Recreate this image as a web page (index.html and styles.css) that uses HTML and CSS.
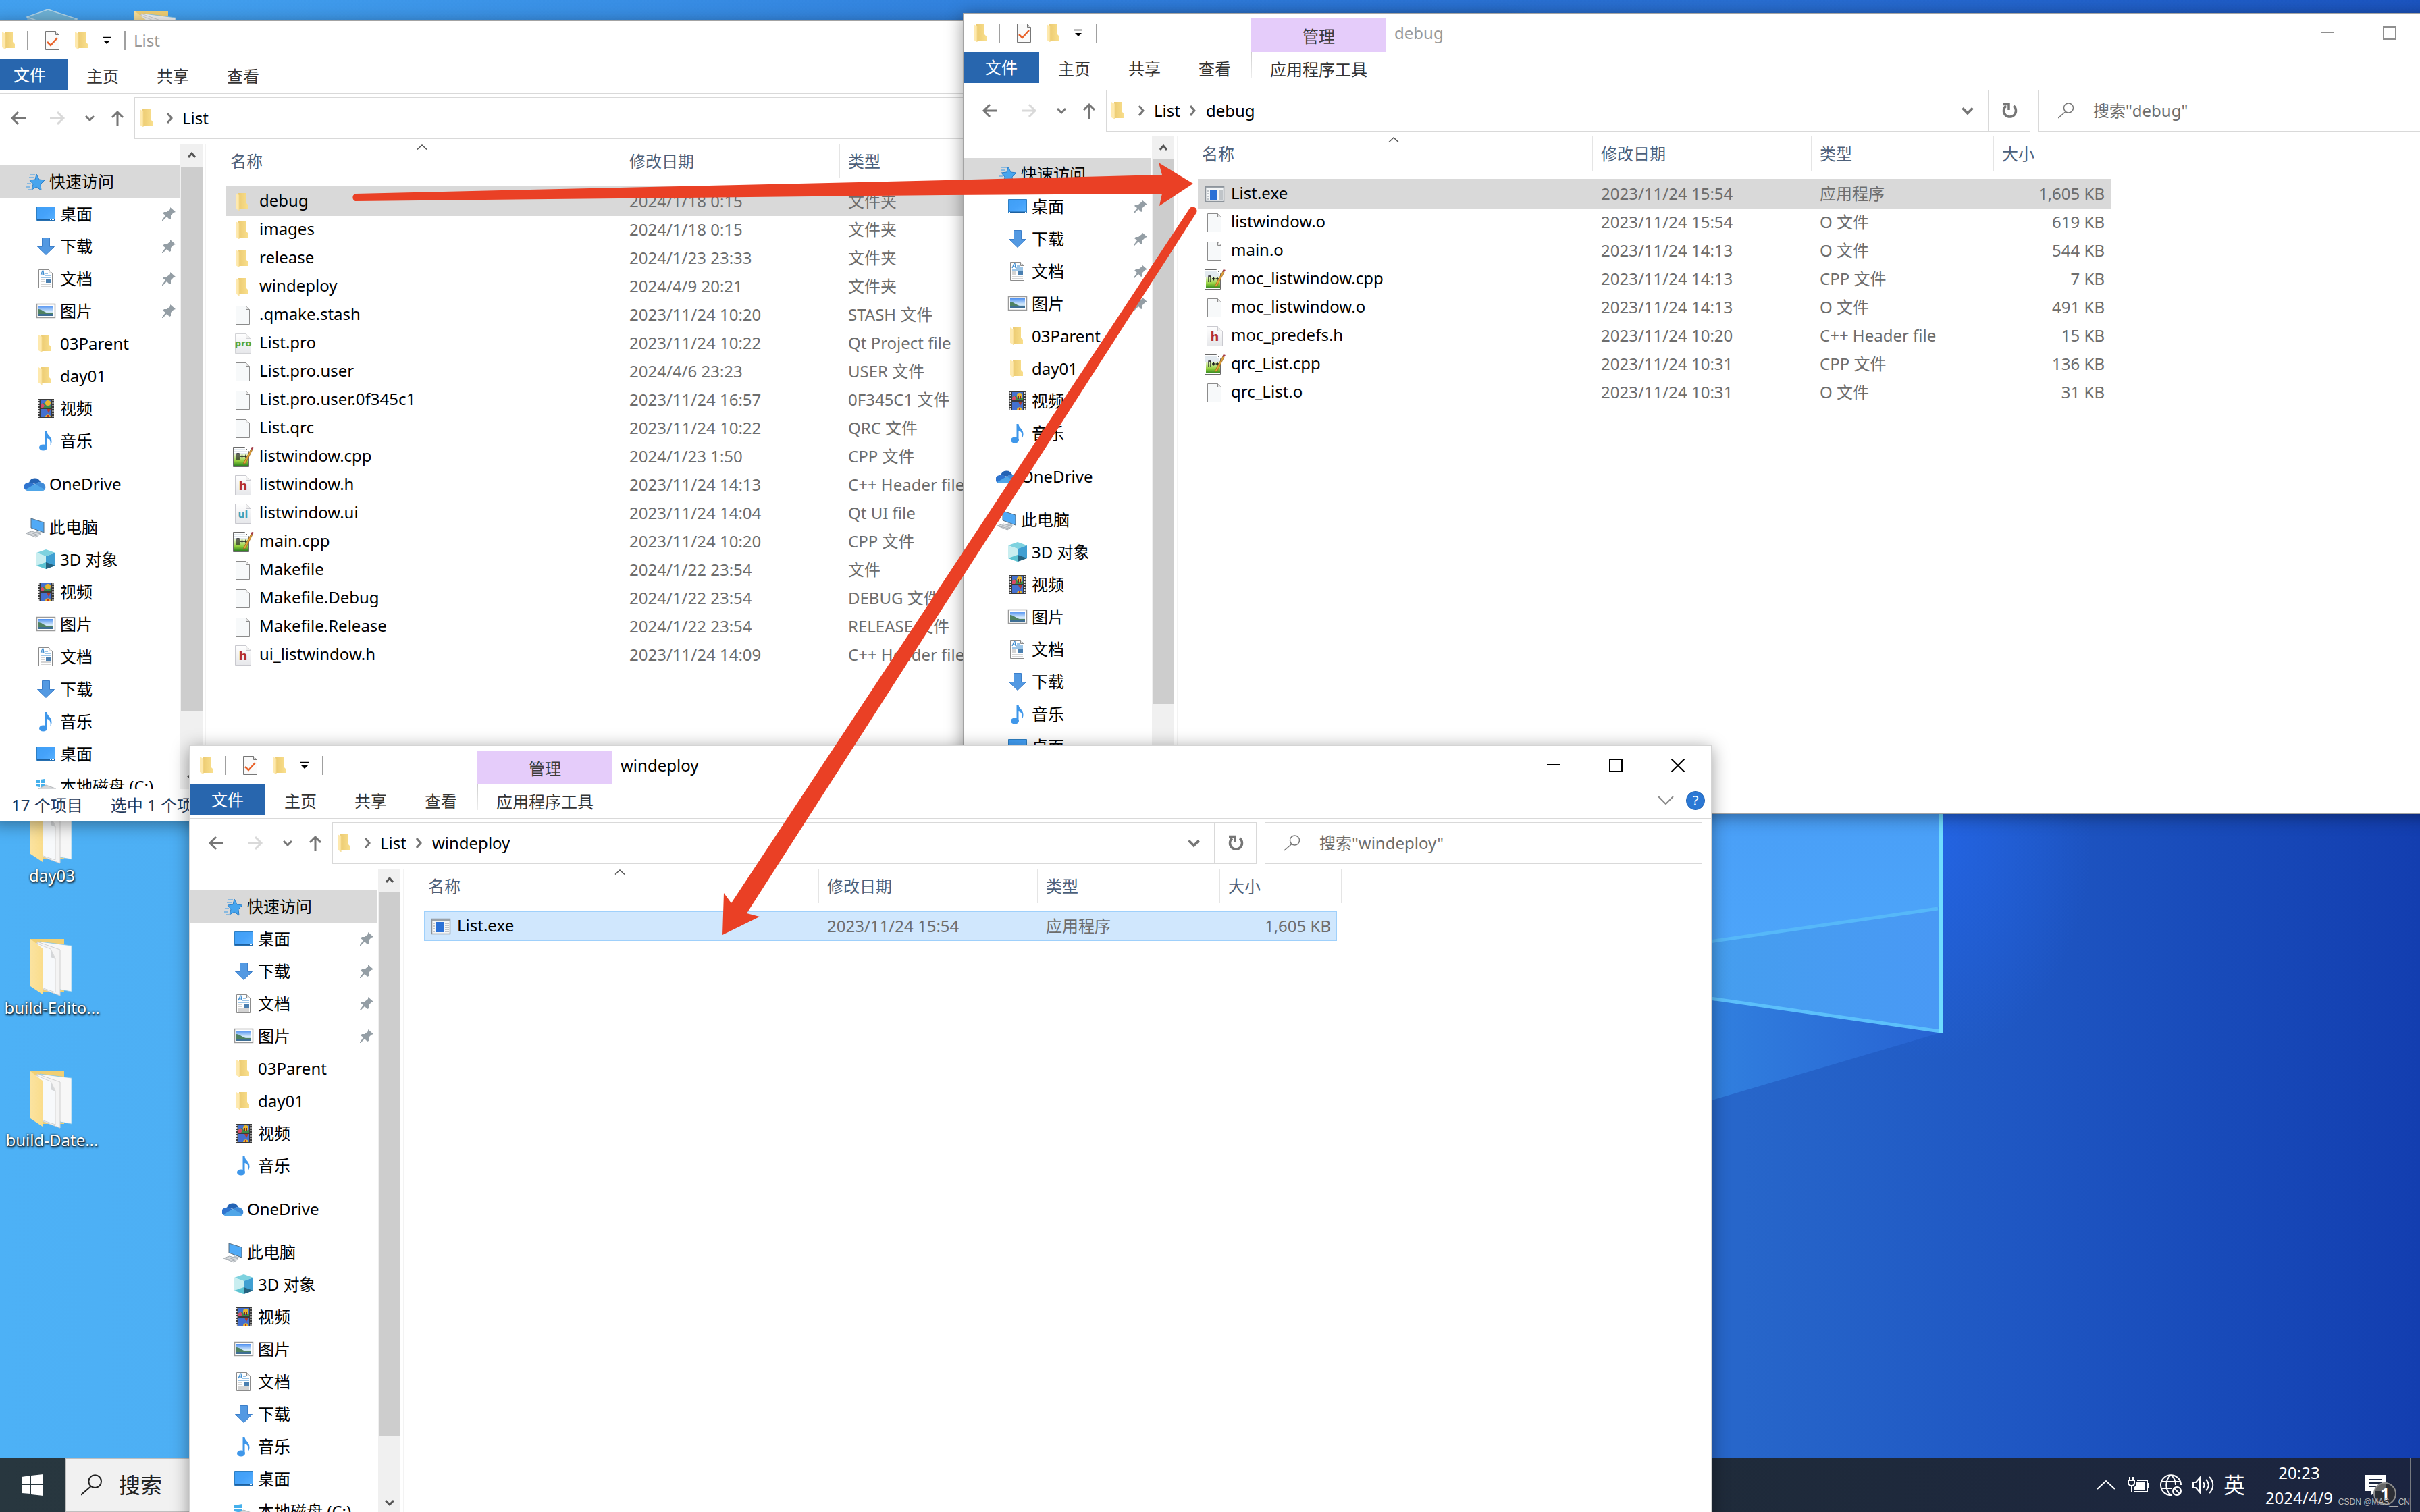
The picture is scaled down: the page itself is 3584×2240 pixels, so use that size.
FILE: index.html
```html
<!DOCTYPE html>
<html lang="zh-CN">
<head>
  <meta charset="UTF-8" />
  <meta name="viewport" content="width=device-width, initial-scale=1" />
  <title>windeploy</title>
  <link rel="stylesheet" href="styles.css">
</head>
<body>

  <!-- icons -->
  <svg class="sprite" aria-hidden="true">
    <defs>
      <linearGradient id="gFolder" x1="0" x2="1"><stop offset="0" stop-color="#eccb72"/><stop offset="1" stop-color="#f9df8d"/></linearGradient>
      <linearGradient id="gBlue" x1="0" y1="0" x2="1" y2="1"><stop offset="0" stop-color="#3f9ff5"/><stop offset="0.5" stop-color="#45a2fa"/><stop offset="1" stop-color="#58b2ff"/></linearGradient>
      <linearGradient id="gSky" x1="0" y1="0" x2="0" y2="1"><stop offset="0" stop-color="#4d8ff0"/><stop offset="0.6" stop-color="#d8ecfb"/><stop offset="1" stop-color="#7da5c4"/></linearGradient>
      <linearGradient id="gGreen" x1="0" y1="0" x2="0" y2="1"><stop offset="0" stop-color="#e9f7cf"/><stop offset="0.6" stop-color="#93cf3c"/><stop offset="1" stop-color="#2e8420"/></linearGradient>
      <linearGradient id="gPage" x1="0" y1="0" x2="0" y2="1"><stop offset="0" stop-color="#ffffff"/><stop offset="1" stop-color="#e6e7ea"/></linearGradient>
      <linearGradient id="gOpen" x1="0" x2="1"><stop offset="0" stop-color="#fbe3a0"/><stop offset="1" stop-color="#fadd8c"/></linearGradient>
    </defs>
    <symbol id="folder" viewBox="0 0 32 32">
      <path d="M9 3h12v15l3 3v6H10z" fill="url(#gFolder)"/>
      <path d="M5 3l5 3v23l-5-3z" fill="#fee9ae"/>
      <path d="M10 6v23" stroke="#f4d888" fill="none"/>
    </symbol>
    <symbol id="file" viewBox="0 0 32 32">
      <path d="M5.500 2.500h15l5 5v22h-20z" fill="#f7f9fa" stroke="#8c8c8c"/>
      <path d="M20.500 2.500v5h5" fill="#e2e2e2" stroke="#8c8c8c"/>
    </symbol>
    <symbol id="check" viewBox="0 0 32 32">
      <path d="M5.500 2.500h15l5 5v22h-20z" fill="#fafafa" stroke="#777"/>
      <path d="M20.500 2.500v5h5" fill="#ddd" stroke="#777"/>
      <path d="M8 18l5 5 10-11" fill="none" stroke="#e8622a" stroke-width="2.500"/>
    </symbol>
    <symbol id="pro" viewBox="0 0 32 32">
      <path d="M4.500 1.500h16l7 7v22h-23z" fill="url(#gPage)" stroke="#d2d3d6"/>
      <path d="M20.500 1.500v7h7" fill="#eee" stroke="#d2d3d6"/>
      <text x="16" y="20" text-anchor="middle" class="badge-text" fill="#57a639" font-size="13">pro</text>
    </symbol>
    <symbol id="hfile" viewBox="0 0 32 32">
      <path d="M4.500 1.500h16l7 7v22h-23z" fill="url(#gPage)" stroke="#c9c9cf"/>
      <path d="M20.500 1.500v7h7" fill="#eee" stroke="#c9c9cf"/>
      <text x="16" y="23" text-anchor="middle" class="badge-text" fill="#b53030" font-size="18">h</text>
    </symbol>
    <symbol id="uifile" viewBox="0 0 32 32">
      <path d="M4.500 1.500h16l7 7v22h-23z" fill="url(#gPage)" stroke="#c9c9cf"/>
      <path d="M20.500 1.500v7h7" fill="#eee" stroke="#c9c9cf"/>
      <text x="16" y="22" text-anchor="middle" class="badge-text" fill="#3fa3bb" font-size="14">ui</text>
    </symbol>
    <symbol id="cpp" viewBox="0 0 32 32">
      <path d="M1.500 1.500h17l6 6v23h-23z" fill="#fff" stroke="#6b6b6b"/>
      <path d="M2 5h17M2 8h20M2 11h22" stroke="#c6d4e0" fill="none"/>
      <path d="M3 12h21v17H3z" fill="url(#gGreen)"/>
      <path d="M7 20v-9h3v9M12 15h5M14.500 12.500v5M17.500 15h5M20 12.500v5" stroke="#1c1c1c" stroke-width="1.300" fill="none"/>
      <path d="M17 24L28 4l2 1-10 20-4 2z" fill="#e6a23a" stroke="#9a6a20" stroke-width="0.800"/>
      <path d="M27 4l2-3 3 1-2 3z" fill="#a63c48"/>
    </symbol>
    <symbol id="exe" viewBox="0 0 32 32">
      <path d="M2.500 4.500h27v22h-27z" fill="#f3f5f6" stroke="#8d949b" stroke-width="1.500"/>
      <path d="M3 6h26" stroke="#9aa1a8" stroke-width="2"/>
      <path d="M9 9h11v15H9z" fill="#2a70d6"/>
      <path d="M4 11h3M4 15h3M4 19h3M4 23h3M22 11h6M22 14h6M22 17h6M22 20h6M22 23h6" stroke="#8d949b" fill="none"/>
    </symbol>
    <symbol id="star" viewBox="0 0 32 32">
      <path d="M18 5l4 8 8 1-6 6 1 9-7-5-7 4 2-8-5-6 8-1z" fill="#47a5ee" stroke="#2b7fc9"/>
      <path d="M8 6h8M7 10h7M4 19h6M3 24h6M6 28h4" stroke="#6eaee2" stroke-width="1.500" fill="none"/>
    </symbol>
    <symbol id="desktop" viewBox="0 0 32 32">
      <path d="M2.500 5.500h27v20h-27z" fill="url(#gBlue)" stroke="#2d7fc4"/>
      <path d="M3 24.500h26" stroke="#1e609f" stroke-width="2"/>
      <path d="M4 24.500h1M22 24.500h1M25 24.500h1M27 24.500h1" stroke="#fff"/>
    </symbol>
    <symbol id="download" viewBox="0 0 32 32">
      <path d="M10.500 3.500h11v13h7L16 28.500 3.500 16.500h7z" fill="#5399e2" stroke="#3c7fca"/>
    </symbol>
    <symbol id="doc" viewBox="0 0 32 32">
      <path d="M5.500 2.500h15l5 5v22h-20z" fill="#fff" stroke="#8c8c8c"/>
      <path d="M20.500 2.500v5h5" fill="#e2e2e2" stroke="#8c8c8c"/>
      <path d="M8 11l3-7h1l1 7M9 9h4M15 8h4M14 11h10M8 14h16" stroke="#3a8bd0" stroke-width="1.200" fill="none"/>
      <path d="M16 16h8v6h-8z" fill="#4a7fb0"/>
      <path d="M8 17h6M8 20h6M8 24h16M8 27h16" stroke="#a9a9a9" fill="none"/>
    </symbol>
    <symbol id="picture" viewBox="0 0 32 32">
      <path d="M2.500 5.500h27v20h-27z" fill="#fff" stroke="#9a9a9a" stroke-width="1.500"/>
      <path d="M5 8h22v15H5z" fill="url(#gSky)"/>
      <path d="M5 13c4 0 8 4 14 6h8v1H5z" fill="#4f8262"/>
      <path d="M5 20h22v3H5z" fill="#3f6f95"/>
    </symbol>
    <symbol id="video" viewBox="0 0 32 32">
      <path d="M4 2h24v28H4z" fill="#3a3a3a"/>
      <path d="M8 3h16v12H8zM8 17h16v12H8z" fill="#4470cf"/>
      <path d="M5.500 3v26M26.500 3v26" stroke="#e8e8e8" stroke-width="2" stroke-dasharray="2 2"/>
      <path d="M8 10l5-2 5 5 6-2v4H8z" fill="#3c8c46"/>
      <path d="M8 11l3-3 3 4-2 3H8z" fill="#d94a6a"/>
      <circle cx="19" cy="8" r="4" fill="#e9b82c"/><path d="M17 8h1v5h-1zM20 8h1v5h-1z" fill="#7a2b1a"/>
      <path d="M17 17h6l-3 6z" fill="#b3382c"/><path d="M15 29c0-5 8-5 8 0z" fill="#e9b82c"/><path d="M18 26h2v3h-2z" fill="#c03020"/>
    </symbol>
    <symbol id="music" viewBox="0 0 32 32">
      <ellipse cx="12" cy="26" rx="6" ry="4.500" fill="#3f97ea"/>
      <path d="M14.500 2h3c0 6 7 7 7 15 0 3-1 5-2 6 1-7-1-10-5-11v14h-3z" fill="#3f97ea"/>
    </symbol>
    <symbol id="cloud" viewBox="0 0 32 32">
      <path d="M7 14a9 9 0 0 1 17-1c-3 0-5 1-7 3z" fill="#2463b4"/>
      <path d="M6 26a6 6 0 0 1-1-12c4-1 7 0 11 3L6 26z" fill="#2f74cf"/>
      <path d="M16 17c3-4 7-5 10-3 7 2 7 11 1 12z" fill="#3f8bd8"/>
      <path d="M2 24l14-8 14 8c-1 1-2 2-4 2H6c-2 0-3-1-4-2z" fill="#50a6e8"/>
    </symbol>
    <symbol id="pc" viewBox="0 0 32 32">
      <path d="M10 3l19 6v15l-19-7z" fill="#50aaf6" stroke="#566a7c"/>
      <path d="M18 21l5 2 3 1-7 3-4-2z" fill="#b9c2c9"/>
      <path d="M2 25l9-3 13 4-7 5z" fill="#d9dcdf" stroke="#a9afb4"/>
      <path d="M6 26l13 3M9 24l12 4" stroke="#a9afb4" fill="none"/>
    </symbol>
    <symbol id="cube" viewBox="0 0 32 32">
      <path d="M16 1l14 5-14 5L2 6z" fill="#7ed2df"/>
      <path d="M2 6l14 5v19L2 25z" fill="#c9eef0"/>
      <path d="M30 6l-14 5v19l14-5z" fill="#3f9fd2"/>
      <path d="M2 25l14-5v10z" fill="#5cc3d2"/>
      <path d="M30 25l-14-5v10z" fill="#25627f"/>
    </symbol>
    <symbol id="disk" viewBox="0 0 32 32">
      <path d="M2 7l5-1v5H2zM8 6l6-1v6H8zM2 12h5v5l-5-1zM8 12h6v6l-6-1z" fill="#45b0ec"/>
      <path d="M4 20l12-6 14 5v7H4z" fill="#d5d7da" stroke="#b4b7ba"/>
    </symbol>
    <symbol id="pin" viewBox="0 0 20 20">
      <path d="M12 0l8 7-3 1-4 4v5l-2 1-4-4-6 6H0v-1l5-7-4-3 2-2 4 0 5-4z" fill="#949ea5"/>
    </symbol>
    <symbol id="back" viewBox="0 0 24 24"><path d="M23 12H3M12 3l-9 9 9 9" fill="none" stroke="currentColor" stroke-width="3"/></symbol>
    <symbol id="forward" viewBox="0 0 24 24"><path d="M1 12h20M12 3l9 9-9 9" fill="none" stroke="currentColor" stroke-width="3"/></symbol>
    <symbol id="up" viewBox="0 0 24 24"><path d="M12 24V3M4 11l8-8 8 8" fill="none" stroke="currentColor" stroke-width="3"/></symbol>
    <symbol id="chev-down" viewBox="0 0 16 16"><path d="M2 5l6 6 6-6" fill="none" stroke="currentColor" stroke-width="3"/></symbol>
    <symbol id="chev-up" viewBox="0 0 16 16"><path d="M3 11l5-6 5 6" fill="none" stroke="currentColor" stroke-width="3"/></symbol>
    <symbol id="chev-right" viewBox="0 0 16 16"><path d="M4 1l6 7-6 7" fill="none" stroke="currentColor" stroke-width="3"/></symbol>
    <symbol id="sort" viewBox="0 0 16 8"><path d="M1 7.500l7-6.500 7 6.500" fill="none" stroke="#555" stroke-width="1.500"/></symbol>
    <symbol id="qa-menu" viewBox="0 0 12 12"><path d="M0 1.500h12" stroke="#000" stroke-width="1.500"/><path d="M1 6h10l-5 5z" fill="#000"/></symbol>
    <symbol id="refresh" viewBox="0 0 24 24">
      <path d="M18 5a9 9 0 1 1-11 0" fill="none" stroke="currentColor" stroke-width="3.500"/>
      <path d="M2 2.500h9V11" fill="none" stroke="currentColor" stroke-width="3.500"/>
    </symbol>
    <symbol id="search" viewBox="0 0 24 24"><circle cx="15.500" cy="8" r="7" fill="none" stroke="currentColor" stroke-width="1.500"/><path d="M11 13.500L0 23" stroke="currentColor" stroke-width="1.500"/></symbol>
    <symbol id="min" viewBox="0 0 20 20"><path d="M0 9h20" stroke="currentColor" stroke-width="2"/></symbol>
    <symbol id="max" viewBox="0 0 20 20"><path d="M1 1h18v18H1z" fill="none" stroke="currentColor" stroke-width="2"/></symbol>
    <symbol id="close" viewBox="0 0 20 20"><path d="M0 0l20 20M20 0L0 20" stroke="currentColor" stroke-width="2"/></symbol>
    <symbol id="collapse" viewBox="0 0 24 24"><path d="M1 7l11 11L23 7" fill="none" stroke="#8a8a8a" stroke-width="2"/></symbol>
    <symbol id="bin" viewBox="0 0 76 88">
      <path d="M1 11L32 0l43 14v60L38 88 8 74z" fill="#7fb7dc"/>
      <path d="M1 11L32 0l43 14-32 12z" fill="#6fb3d8" stroke="#b4d7ea" stroke-width="1.500"/>
    </symbol>
    <symbol id="openfolder" viewBox="0 0 64 88">
      <path d="M0 2h50v78H18z" fill="#f0cf74"/>
      <path d="M14 6l47 6v68l-17-3z" fill="#f7f7f7" stroke="#7fc4ea" stroke-width="0.800"/>
      <path d="M10 6l34 12v68L18 76z" fill="#f4f4f4" stroke="#cfcfcf"/>
      <path d="M8 8l22 9 7 14v50L16 74z" fill="#f7f9fb" stroke="#d5d5d5"/>
      <path d="M30 17v12l7 3z" fill="#d4d6d8"/>
      <path d="M0 2l18 14v68L0 72z" fill="url(#gOpen)"/>
    </symbol>
  </svg>

  <div class="desktop">
    <svg class="wallpaper" viewBox="0 0 3584 2240" preserveAspectRatio="none" aria-hidden="true">
      <defs>
        <linearGradient id="wBase" x1="0" x2="1">
          <stop offset="0" stop-color="#4db1f6"/><stop offset="0.080" stop-color="#4daff4"/>
          <stop offset="0.400" stop-color="#3482db"/><stop offset="0.640" stop-color="#2767ca"/>
          <stop offset="0.720" stop-color="#2766ca"/><stop offset="0.830" stop-color="#1f57c3"/>
          <stop offset="0.920" stop-color="#184ab9"/><stop offset="1" stop-color="#133eb0"/>
        </linearGradient>
        <linearGradient id="wTop" x1="0" y1="0" x2="0" y2="1"><stop offset="0" stop-color="#2c7fe0" stop-opacity="0.350"/><stop offset="0.500" stop-color="#2c7fe0" stop-opacity="0"/></linearGradient>
        <radialGradient id="wGlow"><stop offset="0" stop-color="#2468f0" stop-opacity="0.700"/><stop offset="1" stop-color="#2468f0" stop-opacity="0"/></radialGradient>
        <linearGradient id="wPane" x1="0" y1="0" x2="0" y2="1"><stop offset="0" stop-color="#4699f4"/><stop offset="1" stop-color="#4da5fa"/></linearGradient>
        <linearGradient id="wLower" x1="0" x2="1"><stop offset="0.250" stop-color="#459eee"/><stop offset="1" stop-color="#4999f5"/></linearGradient>
        <linearGradient id="wBeam" x1="0" x2="1"><stop offset="0.200" stop-color="#3283e0"/><stop offset="1" stop-color="#2762d2"/></linearGradient>
      </defs>
      <rect width="3584" height="2240" fill="url(#wBase)"/>
      <rect width="3584" height="2240" fill="url(#wTop)"/>
      <ellipse cx="2860" cy="1230" rx="240" ry="340" fill="url(#wGlow)"/>
      <path d="M2400 1450l477 79-477 141z" fill="url(#wBeam)"/>
      <path d="M2400 1000h477v530l-477-70z" fill="url(#wLower)"/>
      <path d="M2400 1000h477v343l-477 70z" fill="url(#wPane)"/>
      <path d="M2400 1414l470-68" stroke="#56b8f9" stroke-width="5" fill="none"/>
      <path d="M2400 1460l474 68" stroke="#5cc0fb" stroke-width="5" fill="none"/>
      <path d="M2874 1000v531" stroke="#6fdcff" stroke-width="6" fill="none"/>
    </svg>

    <div class="shortcut at-bin"><svg class="big"><use href="#bin"/></svg></div>
    <div class="shortcut at-top"><svg class="big"><use href="#openfolder"/></svg></div>
    <div class="shortcut at-day03"><svg class="big"><use href="#openfolder"/></svg><span>day03</span></div>
    <div class="shortcut at-editor"><svg class="big"><use href="#openfolder"/></svg><span>build-Edito...</span></div>
    <div class="shortcut at-date"><svg class="big"><use href="#openfolder"/></svg><span>build-Date...</span></div>

    <footer class="taskbar">
      <button class="start" title="开始"><svg viewBox="0 0 32 32"><path d="M0 4l13-2v13H0zM14 2l18-2v15H14zM0 16h13v13L0 28zM14 16h18v16l-18-2z" fill="#fff"/></svg></button>
      <button class="task-search"><svg><use href="#search"/></svg>搜索</button>
      <div class="tray">
        <button class="tray-btn" title="显示隐藏的图标"><svg viewBox="0 0 32 32"><path d="M3 22L16 10l13 12" fill="none" stroke="#fff" stroke-width="2"/></svg></button>
        <button class="tray-btn" title="电池"><svg viewBox="0 0 32 32"><path d="M3 4v5M8 4v5M1 9h9v4c0 3-2 4-4 4s-5-1-5-4zM6 17v10M14 9h15v17H9" fill="none" stroke="#fff" stroke-width="2"/><path d="M13 12h13v11H10v-4l3-3zM30 13h2v7h-2z" fill="#fff"/></svg></button>
        <button class="tray-btn" title="网络"><svg viewBox="0 0 32 32"><path d="M18 31A15 15 0 1 1 31 16M16 1c-9 8-9 22 0 30M16 1c5 4 7 9 7 15M2 11h28M2 21h16" fill="none" stroke="#fff" stroke-width="2"/><circle cx="25" cy="25" r="6" fill="none" stroke="#fff" stroke-width="2"/><path d="M21 21l8 8" stroke="#fff" stroke-width="2"/></svg></button>
        <button class="tray-btn" title="音量"><svg viewBox="0 0 32 32"><path d="M1 12h4l6-7v22l-6-7H1zM16 12c2 2 2 6 0 8M20 8c5 5 5 11 0 16M25 4c7 7 7 17 0 24" fill="none" stroke="#fff" stroke-width="2"/></svg></button>
        <button class="ime">英</button>
        <div class="clock"><span>20:23</span><span>2024/4/9</span></div>
        <button class="notice" title="通知"><svg viewBox="0 0 32 32"><path d="M0 1h32v24H16l-6 6v-6H0z" fill="#fff"/><path d="M6 8h20M6 13h20M6 18h12" stroke="#1c2740" stroke-width="2"/></svg><span class="count">1</span></button>
        <div class="show-desktop"></div>
      </div>
    </footer>

    <!-- List -->
    <section class="window win-list inactive">
      <header class="titlebar">
        <div class="quick">
          <svg class="icon"><use href="#folder"/></svg><i class="sep"></i>
          <button title="属性"><svg class="icon"><use href="#check"/></svg></button>
          <button title="新建文件夹"><svg class="icon"><use href="#folder"/></svg></button>
          <button class="narrow" title="自定义"><svg class="caret"><use href="#qa-menu"/></svg></button><i class="sep"></i>
        </div>
        <h1>List</h1>
      </header>
      <nav class="tabs">
        <button class="tab file-tab">文件</button><button class="tab">主页</button><button class="tab">共享</button><button class="tab">查看</button>
      </nav>
      <div class="nav">
        <button class="go"><svg><use href="#back"/></svg></button>
        <button class="go off"><svg><use href="#forward"/></svg></button>
        <button class="recent"><svg><use href="#chev-down"/></svg></button>
        <button class="parent"><svg><use href="#up"/></svg></button>
        <div class="address">
          <svg class="icon"><use href="#folder"/></svg><svg class="crumb-sep"><use href="#chev-right"/></svg><a href="#">List</a>
        </div>
      </div>
      <div class="body">
        <aside class="side">
          <a class="top selected" href="#"><svg class="icon"><use href="#star"/></svg>快速访问</a>
          <a href="#"><svg class="icon"><use href="#desktop"/></svg>桌面<svg class="pin"><use href="#pin"/></svg></a>
          <a href="#"><svg class="icon"><use href="#download"/></svg>下载<svg class="pin"><use href="#pin"/></svg></a>
          <a href="#"><svg class="icon"><use href="#doc"/></svg>文档<svg class="pin"><use href="#pin"/></svg></a>
          <a href="#"><svg class="icon"><use href="#picture"/></svg>图片<svg class="pin"><use href="#pin"/></svg></a>
          <a href="#"><svg class="icon"><use href="#folder"/></svg>03Parent</a>
          <a href="#"><svg class="icon"><use href="#folder"/></svg>day01</a>
          <a href="#"><svg class="icon"><use href="#video"/></svg>视频</a>
          <a href="#"><svg class="icon"><use href="#music"/></svg>音乐</a>
          <a class="top group" href="#"><svg class="icon"><use href="#cloud"/></svg>OneDrive</a>
          <a class="top group" href="#"><svg class="icon"><use href="#pc"/></svg>此电脑</a>
          <a href="#"><svg class="icon"><use href="#cube"/></svg>3D 对象</a>
          <a href="#"><svg class="icon"><use href="#video"/></svg>视频</a>
          <a href="#"><svg class="icon"><use href="#picture"/></svg>图片</a>
          <a href="#"><svg class="icon"><use href="#doc"/></svg>文档</a>
          <a href="#"><svg class="icon"><use href="#download"/></svg>下载</a>
          <a href="#"><svg class="icon"><use href="#music"/></svg>音乐</a>
          <a href="#"><svg class="icon"><use href="#desktop"/></svg>桌面</a>
          <a href="#"><svg class="icon"><use href="#disk"/></svg>本地磁盘 (C:)</a>
        </aside>
        <div class="scroll"><svg><use href="#chev-up"/></svg><div class="thumb"></div><svg><use href="#chev-down"/></svg></div>
        <main class="pane">
          <table class="files">
            <thead><tr><th class="c-name">名称<svg class="sort"><use href="#sort"/></svg></th><th class="c-date">修改日期</th><th class="c-type">类型</th><th class="c-size">大小</th></tr></thead>
            <tbody>
              <tr class="selected"><td><svg class="icon"><use href="#folder"/></svg>debug</td><td>2024/1/18 0:15</td><td>文件夹</td><td></td></tr>
              <tr><td><svg class="icon"><use href="#folder"/></svg>images</td><td>2024/1/18 0:15</td><td>文件夹</td><td></td></tr>
              <tr><td><svg class="icon"><use href="#folder"/></svg>release</td><td>2024/1/23 23:33</td><td>文件夹</td><td></td></tr>
              <tr><td><svg class="icon"><use href="#folder"/></svg>windeploy</td><td>2024/4/9 20:21</td><td>文件夹</td><td></td></tr>
              <tr><td><svg class="icon"><use href="#file"/></svg>.qmake.stash</td><td>2023/11/24 10:20</td><td>STASH 文件</td><td></td></tr>
              <tr><td><svg class="icon"><use href="#pro"/></svg>List.pro</td><td>2023/11/24 10:22</td><td>Qt Project file</td><td></td></tr>
              <tr><td><svg class="icon"><use href="#file"/></svg>List.pro.user</td><td>2024/4/6 23:23</td><td>USER 文件</td><td></td></tr>
              <tr><td><svg class="icon"><use href="#file"/></svg>List.pro.user.0f345c1</td><td>2023/11/24 16:57</td><td>0F345C1 文件</td><td></td></tr>
              <tr><td><svg class="icon"><use href="#file"/></svg>List.qrc</td><td>2023/11/24 10:22</td><td>QRC 文件</td><td></td></tr>
              <tr><td><svg class="icon"><use href="#cpp"/></svg>listwindow.cpp</td><td>2024/1/23 1:50</td><td>CPP 文件</td><td></td></tr>
              <tr><td><svg class="icon"><use href="#hfile"/></svg>listwindow.h</td><td>2023/11/24 14:13</td><td>C++ Header file</td><td></td></tr>
              <tr><td><svg class="icon"><use href="#uifile"/></svg>listwindow.ui</td><td>2023/11/24 14:04</td><td>Qt UI file</td><td></td></tr>
              <tr><td><svg class="icon"><use href="#cpp"/></svg>main.cpp</td><td>2023/11/24 10:20</td><td>CPP 文件</td><td></td></tr>
              <tr><td><svg class="icon"><use href="#file"/></svg>Makefile</td><td>2024/1/22 23:54</td><td>文件</td><td></td></tr>
              <tr><td><svg class="icon"><use href="#file"/></svg>Makefile.Debug</td><td>2024/1/22 23:54</td><td>DEBUG 文件</td><td></td></tr>
              <tr><td><svg class="icon"><use href="#file"/></svg>Makefile.Release</td><td>2024/1/22 23:54</td><td>RELEASE 文件</td><td></td></tr>
              <tr><td><svg class="icon"><use href="#hfile"/></svg>ui_listwindow.h</td><td>2023/11/24 14:09</td><td>C++ Header file</td><td></td></tr>
            </tbody>
          </table>
        </main>
      </div>
      <div class="status"><span>17 个项目</span><span>选中 1 个项目</span></div>
    </section>

    <!-- debug -->
    <section class="window win-debug inactive">
      <header class="titlebar">
        <div class="quick wide">
          <svg class="icon"><use href="#folder"/></svg><i class="sep"></i>
          <button title="属性"><svg class="icon"><use href="#check"/></svg></button>
          <button title="新建文件夹"><svg class="icon"><use href="#folder"/></svg></button>
          <button class="narrow" title="自定义"><svg class="caret"><use href="#qa-menu"/></svg></button><i class="sep"></i>
        </div>
        <div class="context">管理</div>
        <h1>debug</h1>
        <div class="controls">
          <button title="最小化"><svg><use href="#min"/></svg></button><button title="最大化"><svg><use href="#max"/></svg></button><button title="关闭"><svg><use href="#close"/></svg></button>
        </div>
      </header>
      <nav class="tabs">
        <button class="tab file-tab">文件</button><button class="tab">主页</button><button class="tab">共享</button><button class="tab">查看</button><button class="tab context-tab">应用程序工具</button>
      </nav>
      <div class="nav">
        <button class="go"><svg><use href="#back"/></svg></button>
        <button class="go off"><svg><use href="#forward"/></svg></button>
        <button class="recent"><svg><use href="#chev-down"/></svg></button>
        <button class="parent"><svg><use href="#up"/></svg></button>
        <div class="address">
          <svg class="icon"><use href="#folder"/></svg><svg class="crumb-sep"><use href="#chev-right"/></svg><a href="#">List</a><svg class="crumb-sep"><use href="#chev-right"/></svg><a href="#">debug</a>
          <button class="drop"><svg><use href="#chev-down"/></svg></button>
          <button class="reload"><svg><use href="#refresh"/></svg></button>
        </div>
        <label class="find"><svg><use href="#search"/></svg><input type="text" aria-label="搜索" placeholder="搜索&quot;debug&quot;"></label>
      </div>
      <div class="body">
        <aside class="side">
          <a class="top selected" href="#"><svg class="icon"><use href="#star"/></svg>快速访问</a>
          <a href="#"><svg class="icon"><use href="#desktop"/></svg>桌面<svg class="pin"><use href="#pin"/></svg></a>
          <a href="#"><svg class="icon"><use href="#download"/></svg>下载<svg class="pin"><use href="#pin"/></svg></a>
          <a href="#"><svg class="icon"><use href="#doc"/></svg>文档<svg class="pin"><use href="#pin"/></svg></a>
          <a href="#"><svg class="icon"><use href="#picture"/></svg>图片<svg class="pin"><use href="#pin"/></svg></a>
          <a href="#"><svg class="icon"><use href="#folder"/></svg>03Parent</a>
          <a href="#"><svg class="icon"><use href="#folder"/></svg>day01</a>
          <a href="#"><svg class="icon"><use href="#video"/></svg>视频</a>
          <a href="#"><svg class="icon"><use href="#music"/></svg>音乐</a>
          <a class="top group" href="#"><svg class="icon"><use href="#cloud"/></svg>OneDrive</a>
          <a class="top group" href="#"><svg class="icon"><use href="#pc"/></svg>此电脑</a>
          <a href="#"><svg class="icon"><use href="#cube"/></svg>3D 对象</a>
          <a href="#"><svg class="icon"><use href="#video"/></svg>视频</a>
          <a href="#"><svg class="icon"><use href="#picture"/></svg>图片</a>
          <a href="#"><svg class="icon"><use href="#doc"/></svg>文档</a>
          <a href="#"><svg class="icon"><use href="#download"/></svg>下载</a>
          <a href="#"><svg class="icon"><use href="#music"/></svg>音乐</a>
          <a href="#"><svg class="icon"><use href="#desktop"/></svg>桌面</a>
        </aside>
        <div class="scroll"><svg><use href="#chev-up"/></svg><div class="thumb"></div><svg><use href="#chev-down"/></svg></div>
        <main class="pane">
          <table class="files">
            <thead><tr><th class="c-name">名称<svg class="sort"><use href="#sort"/></svg></th><th class="c-date">修改日期</th><th class="c-type">类型</th><th class="c-size">大小</th></tr></thead>
            <tbody>
              <tr class="selected"><td><svg class="icon"><use href="#exe"/></svg>List.exe</td><td>2023/11/24 15:54</td><td>应用程序</td><td>1,605 KB</td></tr>
              <tr><td><svg class="icon"><use href="#file"/></svg>listwindow.o</td><td>2023/11/24 15:54</td><td>O 文件</td><td>619 KB</td></tr>
              <tr><td><svg class="icon"><use href="#file"/></svg>main.o</td><td>2023/11/24 14:13</td><td>O 文件</td><td>544 KB</td></tr>
              <tr><td><svg class="icon"><use href="#cpp"/></svg>moc_listwindow.cpp</td><td>2023/11/24 14:13</td><td>CPP 文件</td><td>7 KB</td></tr>
              <tr><td><svg class="icon"><use href="#file"/></svg>moc_listwindow.o</td><td>2023/11/24 14:13</td><td>O 文件</td><td>491 KB</td></tr>
              <tr><td><svg class="icon"><use href="#hfile"/></svg>moc_predefs.h</td><td>2023/11/24 10:20</td><td>C++ Header file</td><td>15 KB</td></tr>
              <tr><td><svg class="icon"><use href="#cpp"/></svg>qrc_List.cpp</td><td>2023/11/24 10:31</td><td>CPP 文件</td><td>136 KB</td></tr>
              <tr><td><svg class="icon"><use href="#file"/></svg>qrc_List.o</td><td>2023/11/24 10:31</td><td>O 文件</td><td>31 KB</td></tr>
            </tbody>
          </table>
        </main>
      </div>
      <div class="status"></div>
    </section>

    <!-- windeploy -->
    <section class="window win-deploy">
      <header class="titlebar">
        <div class="quick wide">
          <svg class="icon"><use href="#folder"/></svg><i class="sep"></i>
          <button title="属性"><svg class="icon"><use href="#check"/></svg></button>
          <button title="新建文件夹"><svg class="icon"><use href="#folder"/></svg></button>
          <button class="narrow" title="自定义"><svg class="caret"><use href="#qa-menu"/></svg></button><i class="sep"></i>
        </div>
        <div class="context">管理</div>
        <h1>windeploy</h1>
        <div class="controls">
          <button title="最小化"><svg><use href="#min"/></svg></button><button title="最大化"><svg><use href="#max"/></svg></button><button title="关闭"><svg><use href="#close"/></svg></button>
        </div>
      </header>
      <nav class="tabs">
        <button class="tab file-tab">文件</button><button class="tab">主页</button><button class="tab">共享</button><button class="tab">查看</button><button class="tab context-tab">应用程序工具</button>
        <button class="collapse" title="最小化功能区"><svg><use href="#collapse"/></svg></button>
        <button class="help" title="帮助">?</button>
      </nav>
      <div class="nav">
        <button class="go"><svg><use href="#back"/></svg></button>
        <button class="go off"><svg><use href="#forward"/></svg></button>
        <button class="recent"><svg><use href="#chev-down"/></svg></button>
        <button class="parent"><svg><use href="#up"/></svg></button>
        <div class="address">
          <svg class="icon"><use href="#folder"/></svg><svg class="crumb-sep"><use href="#chev-right"/></svg><a href="#">List</a><svg class="crumb-sep"><use href="#chev-right"/></svg><a href="#">windeploy</a>
          <button class="drop"><svg><use href="#chev-down"/></svg></button>
          <button class="reload"><svg><use href="#refresh"/></svg></button>
        </div>
        <label class="find"><svg><use href="#search"/></svg><input type="text" aria-label="搜索" placeholder="搜索&quot;windeploy&quot;"></label>
      </div>
      <div class="body">
        <aside class="side">
          <a class="top selected" href="#"><svg class="icon"><use href="#star"/></svg>快速访问</a>
          <a href="#"><svg class="icon"><use href="#desktop"/></svg>桌面<svg class="pin"><use href="#pin"/></svg></a>
          <a href="#"><svg class="icon"><use href="#download"/></svg>下载<svg class="pin"><use href="#pin"/></svg></a>
          <a href="#"><svg class="icon"><use href="#doc"/></svg>文档<svg class="pin"><use href="#pin"/></svg></a>
          <a href="#"><svg class="icon"><use href="#picture"/></svg>图片<svg class="pin"><use href="#pin"/></svg></a>
          <a href="#"><svg class="icon"><use href="#folder"/></svg>03Parent</a>
          <a href="#"><svg class="icon"><use href="#folder"/></svg>day01</a>
          <a href="#"><svg class="icon"><use href="#video"/></svg>视频</a>
          <a href="#"><svg class="icon"><use href="#music"/></svg>音乐</a>
          <a class="top group" href="#"><svg class="icon"><use href="#cloud"/></svg>OneDrive</a>
          <a class="top group" href="#"><svg class="icon"><use href="#pc"/></svg>此电脑</a>
          <a href="#"><svg class="icon"><use href="#cube"/></svg>3D 对象</a>
          <a href="#"><svg class="icon"><use href="#video"/></svg>视频</a>
          <a href="#"><svg class="icon"><use href="#picture"/></svg>图片</a>
          <a href="#"><svg class="icon"><use href="#doc"/></svg>文档</a>
          <a href="#"><svg class="icon"><use href="#download"/></svg>下载</a>
          <a href="#"><svg class="icon"><use href="#music"/></svg>音乐</a>
          <a href="#"><svg class="icon"><use href="#desktop"/></svg>桌面</a>
          <a href="#"><svg class="icon"><use href="#disk"/></svg>本地磁盘 (C:)</a>
        </aside>
        <div class="scroll"><svg><use href="#chev-up"/></svg><div class="thumb"></div><svg><use href="#chev-down"/></svg></div>
        <main class="pane">
          <table class="files">
            <thead><tr><th class="c-name">名称<svg class="sort"><use href="#sort"/></svg></th><th class="c-date">修改日期</th><th class="c-type">类型</th><th class="c-size">大小</th></tr></thead>
            <tbody>
              <tr class="selected"><td><svg class="icon"><use href="#exe"/></svg>List.exe</td><td>2023/11/24 15:54</td><td>应用程序</td><td>1,605 KB</td></tr>
            </tbody>
          </table>
        </main>
      </div>
      <div class="status"></div>
    </section>

    <!-- red arrows over the windows -->
    <svg class="arrows" viewBox="0 0 3584 2240" preserveAspectRatio="none" aria-hidden="true">
      <path d="M526 287L1400 267l321-8-5-18 51 31-50 33 4-18-321 2-874 9a6 6 0 0 1 0-11z"/>
      <path d="M1761 310a6 6 0 0 1 11 5L1106 1353l19 5-55 27 2-62 11 15z"/>
    </svg>
    <span class="watermark">CSDN @MAS__CN</span>
  </div>

</body>
</html>
```
FILE: styles.css
```css
* {
  box-sizing: border-box;
}
body {
  margin: 0;
  font-family: 'Noto Sans', 'Noto Sans CJK SC', sans-serif;
  font-size: 24px;
  line-height: 32px;
  color: #000;
}
button {
  font: inherit;
  color: inherit;
  background: none;
  border: none;
  margin: 0;
  padding: 0;
  display: flex;
  align-items: center;
  justify-content: center;
}
a {
  color: inherit;
  text-decoration: none;
}
.sprite {
  position: absolute;
  width: 0;
  height: 0;
}
.badge-text {
  font-family: 'DejaVu Sans', sans-serif;
  font-weight: 700;
}
.icon {
  width: 32px;
  height: 32px;
  flex: none;
}

/* desktop */
.desktop {
  position: relative;
  height: 100vh;
  overflow: hidden;
  display: flex;
  flex-direction: column;
  justify-content: flex-end;
}
.wallpaper,
.arrows {
  position: absolute;
  left: 0;
  top: 0;
  width: 100%;
  height: 100%;
}
.arrows {
  fill: #ea4025;
  pointer-events: none;
}
.shortcut {
  position: absolute;
  left: 0;
  width: 154px;
  display: flex;
  flex-direction: column;
  align-items: center;
  color: #fff;
  text-shadow: 1px 2px 3px #000, 0 0 3px rgba(0, 0, 0, 0.8);
}
.shortcut .big {
  width: 64px;
  height: 88px;
}
.shortcut.at-bin .big {
  width: 76px;
}
.at-bin { top: 14px; }
.at-top { top: 14px; left: 154px; }
.at-day03 { top: 1193px; }
.at-editor { top: 1389px; }
.at-date { top: 1585px; }

/* windows */
.window {
  position: absolute;
  width: 2255px;
  height: 1187px;
  display: flex;
  flex-direction: column;
  background: #fff;
  border: 1px solid #a3a3a3;
  box-shadow: 0 4px 24px rgba(0, 0, 0, 0.4);
}
.win-list { left: -13px; top: 30px; }
.win-debug { left: 1426px; top: 19px; }
.win-deploy { left: 280px; top: 1104px; border-color: #d4d4d4; }

.titlebar {
  display: flex;
  align-items: center;
  height: 57px;
}
.titlebar h1 {
  margin: 0 0 0 12px;
  font-size: 24px;
  font-weight: 400;
}
.inactive .titlebar h1 {
  color: #999;
}
.quick {
  display: flex;
  align-items: center;
  padding-left: 10px;
}
.quick.wide {
  width: 426px;
}
.quick button {
  width: 44px;
}
.quick button.narrow {
  width: 28px;
  margin-right: 12px;
}
.quick .caret {
  width: 12px;
  height: 12px;
}
.sep {
  width: 2px;
  height: 28px;
  background: #a0a0a0;
}
.quick .icon + .sep {
  margin: 0 14px 0 10px;
}
.context {
  align-self: flex-end;
  width: 200px;
  height: 50px;
  line-height: 54px;
  text-align: center;
  background: #e5ccfa;
  color: #3b3b3b;
}
.controls {
  display: flex;
  margin: 0 3px 0 auto;
}
.controls button {
  width: 92px;
  height: 56px;
}
.controls svg {
  width: 20px;
  height: 20px;
}
.inactive .controls {
  color: #8f8f8f;
}

.tabs {
  display: flex;
  height: 51px;
  padding-bottom: 4px;
  border-bottom: 1px solid #d9d9d9;
  color: #333;
}
.tab {
  width: 104px;
  padding-top: 4px;
}
.tab.file-tab {
  width: 112px;
  padding-top: 0;
  background: #2866ae;
  color: #fff;
}
.tab.context-tab {
  width: 200px;
  height: 38px;
  margin-left: 2px;
  padding-top: 14px;
  border: 1px solid;
  border-width: 0 1px;
  border-image: linear-gradient(#ccc, #eee) 1;
}
.collapse {
  margin-left: auto;
}
.collapse svg {
  width: 24px;
  height: 24px;
}
.help {
  align-self: center;
  width: 28px;
  height: 28px;
  margin: 2px 9px 0 18px;
  border: 1px solid #1c5fb0;
  border-radius: 50%;
  background: #2b78d4;
  color: #fff;
  font-size: 20px;
}

.nav {
  display: flex;
  align-items: center;
  height: 74px;
  padding: 5px 13px 7px 10px;
  color: #767676;
}
.nav svg {
  width: 24px;
  height: 24px;
}
.go { width: 58px; }
.go.off { color: #d9d9d9; }
.recent { width: 38px; }
.parent {
  width: 44px;
  margin-right: 3px;
}
.nav .recent svg {
  width: 16px;
  height: 16px;
}
.nav .drop svg {
  width: 20px;
  height: 20px;
}
.address {
  flex: 1;
  display: flex;
  align-items: center;
  height: 62px;
  padding-left: 2px;
  border: 1px solid #d9d9d9;
}
.address a {
  color: #000;
}
.nav .icon {
  width: 32px;
  height: 32px;
}
.nav .crumb-sep {
  width: 38px;
  height: 16px;
}
.address .icon + .crumb-sep {
  width: 36px;
}
.drop {
  width: 60px;
  height: 60px;
  margin-left: auto;
}
.reload {
  width: 62px;
  height: 60px;
  border-left: 1px solid #d9d9d9;
}
.find {
  display: flex;
  align-items: center;
  width: 648px;
  height: 62px;
  margin-left: 12px;
  padding-left: 28px;
  border: 1px solid #d9d9d9;
}
.find input {
  flex: 1;
  margin-left: 28px;
  padding: 0;
  border: none;
  outline: none;
  font: inherit;
}
.find input::placeholder {
  color: #6d6d6d;
}

.body {
  flex: 1;
  display: flex;
  min-height: 0;
}
.side {
  width: 279px;
  padding: 32px 1px 0 0;
  overflow: hidden;
}
.side a {
  display: flex;
  align-items: center;
  height: 48px;
  padding: 0 6px 0 64px;
}
.side .icon {
  margin-right: 5px;
}
.side a.top {
  padding-left: 48px;
}
.side a.group {
  margin-top: 16px;
}
.side a.selected {
  background: #d9d9d9;
}
.side .pin {
  width: 20px;
  height: 20px;
  margin-left: auto;
}
.scroll {
  display: flex;
  flex-direction: column;
  align-items: center;
  width: 33px;
  background: #f0f0f0;
  color: #555;
}
.scroll svg {
  width: 16px;
  height: 34px;
}
.scroll svg:last-child {
  margin-top: auto;
}
.thumb {
  width: 32px;
  height: 807px;
  background: #cdcdcd;
}
.pane {
  flex: 1;
  margin-left: 4px;
  padding-left: 31px;
  border-left: 1px solid #f3f3f3;
  overflow: hidden;
}

/* file list */
.files {
  table-layout: fixed;
  width: 1350px;
  border-collapse: separate;
  border-spacing: 0;
}
.files th {
  position: relative;
  height: 51px;
  padding: 1px 0 0 12px;
  border-left: 1px solid #e5e5e5;
  font-weight: 400;
  text-align: left;
  color: #4c607a;
}
.files th.c-name {
  width: 583px;
  padding-left: 5px;
  border-left: none;
}
.c-date { width: 324px; }
.c-type { width: 270px; }
.c-size::after {
  content: "";
  position: absolute;
  right: -8px;
  top: 0;
  height: 100%;
  border-right: 1px solid #e5e5e5;
}
.sort {
  position: absolute;
  left: 50%;
  top: 1px;
  width: 16px;
  height: 8px;
  margin-left: -11px;
}
.files tbody::before {
  content: "";
  display: block;
  height: 13px;
}
.files td {
  height: 42px;
  padding: 0 0 0 13px;
  color: #6d6d6d;
  white-space: nowrap;
}
.files td:first-child {
  padding-left: 8px;
  color: #000;
}
.files td:last-child {
  padding: 0 8px 0 0;
  text-align: right;
}
.files .icon {
  margin-right: 8px;
  vertical-align: middle;
}
.files tr.selected {
  background: #d9d9d9;
  outline: 1px solid #d9d9d9;
}
.win-deploy .files tr.selected {
  background: #d0e7fd;
  outline-color: #9fd0fb;
}

.status {
  display: flex;
  align-items: center;
  height: 47px;
  padding-left: 29px;
  color: #1e395b;
}
.status span + span {
  margin-left: 20px;
  padding-left: 20px;
  border-left: 1px solid #ececec;
}

/* taskbar */
.taskbar {
  position: relative;
  display: flex;
  height: 80px;
  background: linear-gradient(90deg, #28373f, #1f2b3a 70%, #1b2440);
  color: #fff;
}
.start {
  width: 96px;
}
.start svg,
.tray-btn svg,
.notice svg,
.task-search svg {
  width: 32px;
  height: 32px;
}
.task-search {
  width: 688px;
  justify-content: flex-start;
  gap: 24px;
  padding-left: 22px;
  background: #f1f1f1;
  border: 2px solid #bfbfbf;
  color: #222;
  font-size: 32px;
}
.tray {
  display: flex;
  align-items: center;
  margin-left: auto;
}
.tray-btn {
  width: 48px;
  height: 80px;
}
.ime {
  width: 44px;
  margin-right: 12px;
  font-size: 32px;
}
.clock {
  display: flex;
  flex-direction: column;
  align-items: center;
  gap: 5px;
  width: 124px;
}
.notice {
  position: relative;
  width: 102px;
  height: 80px;
}
.count {
  position: absolute;
  left: 48px;
  top: 36px;
  width: 34px;
  height: 34px;
  border: 2px solid #8c8c8c;
  border-radius: 50%;
  background: rgba(50, 50, 50, 0.75);
  font-weight: 700;
  line-height: 30px;
}
.show-desktop {
  width: 15px;
  height: 80px;
  border-left: 2px solid #76797f;
}
.watermark {
  position: absolute;
  right: 15px;
  bottom: 6px;
  font-family: 'Liberation Sans', Arial, sans-serif;
  font-size: 12px;
  line-height: 18px;
  color: #b9b9b9;
}
```
